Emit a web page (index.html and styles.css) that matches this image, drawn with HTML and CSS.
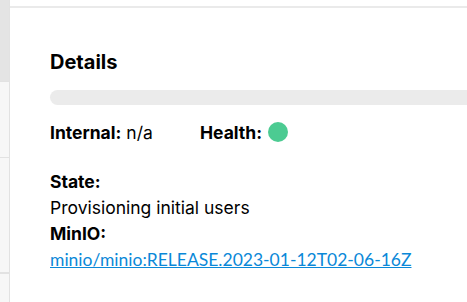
FILE: index.html
```html
<!DOCTYPE html>
<html lang="en">
<head>
    <meta charset="UTF-8">
    <meta name="viewport" content="width=device-width, initial-scale=1.0">
    <title>Tenant details</title>
    <link rel="stylesheet" href="styles.css">
</head>
<body>
    <div class="sidebar">
        <div class="side-item side-active"></div>
        <div class="side-item side-mid"></div>
        <div class="side-item side-low"></div>
        <div class="side-item"></div>
    </div>
    <div class="main">
        <div class="panel">
            <h3 class="title">Details</h3>
            <div class="progress"></div>
            <div class="row">
                <div class="field"><b>Internal:</b> n/a</div>
                <div class="field health"><b>Health:</b> <span class="dot"></span></div>
            </div>
            <div class="block">
                <div class="label">State:</div>
                <div class="value">Provisioning initial users</div>
                <div class="label">MinIO:</div>
                <div class="value"><a href="#">minio/minio:RELEASE.2023-01-12T02-06-16Z</a></div>
            </div>
        </div>
    </div>
</body>
</html>
```

FILE: styles.css
```css
html,
body {
    margin: 0;
    padding: 0;
    height: 100%;
    background: #fff;
    font-family: Inter, "Noto Sans", sans-serif;
    color: #000;
    overflow: hidden;
}
body {
    display: flex;
}
.sidebar {
    width: 9px;
    flex-shrink: 0;
    background-color: #f7f7f7;
    border-right: 1px solid #e2e2e2;
}
.side-item {
    border-bottom: 1px solid #e2e2e2;
}
.side-active {
    height: 81px;
    background-color: #e4e4e4;
}
.side-mid {
    height: 75px;
}
.side-low {
    height: 114px;
}
.main {
    flex: 1;
    padding-top: 6px;
}
.panel {
    border-top: 2px solid #eaeaea;
    padding: 42px 0 0 40px;
}
.title {
    margin: 0;
    font-size: 20px;
    font-weight: 700;
    line-height: 24px;
}
.progress {
    margin-top: 16px;
    height: 15px;
    background-color: #ebebeb;
    border-radius: 8px 0 0 8px;
}
.row {
    display: flex;
    align-items: center;
    margin-top: 16px;
    font-size: 17.5px;
    line-height: 24px;
}
.field {
    width: 150px;
}
.health {
    display: flex;
    align-items: center;
    gap: 6px;
}
.dot {
    width: 20px;
    height: 20px;
    border-radius: 50%;
    background-color: #4ccb92;
    margin-top: -3px;
}
.block {
    margin-top: 24px;
    font-size: 17.5px;
    line-height: 26px;
}
.label {
    font-weight: 700;
}
.value a {
    font-family: Lato, sans-serif;
    color: #0a88d8;
}
```
